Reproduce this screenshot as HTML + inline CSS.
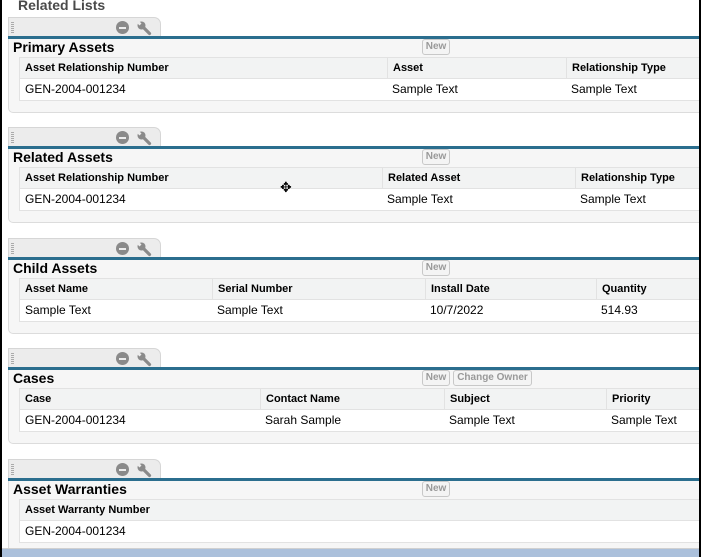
<!DOCTYPE html>
<html><head><meta charset="utf-8"><style>
*{margin:0;padding:0;box-sizing:border-box}
body{width:701px;height:557px;overflow:hidden;background:#fff;font-family:"Liberation Sans",Arial,sans-serif;color:#000;position:relative}
.abs{position:absolute}
.h1{left:18px;top:-3px;font-size:14px;font-weight:bold;color:#4a4a4a}
.tab{left:8px;width:153px;height:20px;background:#ececec;border:1px solid #d6d6d6;border-bottom:none;border-radius:0 7px 0 0}
.grip{position:absolute;left:2px;top:4px;width:3px;height:11px;background:repeating-linear-gradient(#aaa 0 1px,transparent 1px 2px)}
.minus{position:absolute;left:107px;top:3px;width:13px;height:13px;border-radius:50%;background:#8a8a8a}
.minus:after{content:"";position:absolute;left:3px;top:6px;width:7px;height:2px;background:#ececec}
.wr{position:absolute;left:127px;top:2px}
.line{left:8px;right:0;height:3px;background:#2b6e8e}
.panel{left:8px;right:0;height:74px;background:#f6f6f6;border:1px solid #dcdcdc;border-top:none;border-radius:0 0 0 5px}
.title{left:13px;font-size:14px;font-weight:bold}
.btn{height:16px;border:1px solid #c8c8c8;border-radius:3px;background:#f4f4f4;color:#999;font-size:10px;font-weight:bold;line-height:14px;text-align:center}
.th{left:19px;right:0;height:22px;background:#f2f3f3;border:1px solid #e2e2e2;border-right:none}
.td{left:19px;right:0;height:22px;background:#fff;border:1px solid #e2e2e2;border-top:none;border-right:none}
.c{position:absolute;top:0;height:100%;line-height:20px;padding-left:5px;border-left:1px solid #e2e2e2}
.th .c{font-size:11px;font-weight:bold}
.td .c{font-size:12px;border-left:none}
.c.f{border-left:none}
</style></head><body>
<div class="abs h1">Related Lists</div>

<div class="abs tab" style="top:17px"><div class="grip"></div><div class="minus"></div><svg class="wr" width="16" height="16" viewBox="0 0 16 16"><circle cx="5.5" cy="5.5" r="4" fill="#8a8a8a"/><path d="M3 1 L5.5 3.5 L3.5 5.5 L1 3 Z" fill="#ececec"/><path d="M6 6 L13.5 13.5" stroke="#8a8a8a" stroke-width="3.2" stroke-linecap="round"/></svg></div>
<div class="abs line" style="top:36px"></div>
<div class="abs panel" style="top:39px"></div>
<div class="abs title" style="top:39px">Primary Assets</div>
<div class="abs btn" style="left:422px;top:39px;width:28px">New</div>
<div class="abs th" style="top:57px"><div class="c f" style="left:0">Asset Relationship Number</div><div class="c" style="left:367px">Asset</div><div class="c" style="left:546px">Relationship Type</div></div>
<div class="abs td" style="top:79px"><div class="c" style="left:0">GEN-2004-001234</div><div class="c" style="left:367px">Sample Text</div><div class="c" style="left:546px">Sample Text</div></div>

<div class="abs tab" style="top:127px"><div class="grip"></div><div class="minus"></div><svg class="wr" width="16" height="16" viewBox="0 0 16 16"><circle cx="5.5" cy="5.5" r="4" fill="#8a8a8a"/><path d="M3 1 L5.5 3.5 L3.5 5.5 L1 3 Z" fill="#ececec"/><path d="M6 6 L13.5 13.5" stroke="#8a8a8a" stroke-width="3.2" stroke-linecap="round"/></svg></div>
<div class="abs line" style="top:146px"></div>
<div class="abs panel" style="top:149px"></div>
<div class="abs title" style="top:149px">Related Assets</div>
<div class="abs btn" style="left:422px;top:149px;width:28px">New</div>
<div class="abs th" style="top:167px"><div class="c f" style="left:0">Asset Relationship Number</div><div class="c" style="left:362px">Related Asset</div><div class="c" style="left:555px">Relationship Type</div></div>
<div class="abs td" style="top:189px"><div class="c" style="left:0">GEN-2004-001234</div><div class="c" style="left:362px">Sample Text</div><div class="c" style="left:555px">Sample Text</div></div>
<div class="abs" style="left:280px;top:180px;font-size:14px;line-height:14px">✥</div>

<div class="abs tab" style="top:238px"><div class="grip"></div><div class="minus"></div><svg class="wr" width="16" height="16" viewBox="0 0 16 16"><circle cx="5.5" cy="5.5" r="4" fill="#8a8a8a"/><path d="M3 1 L5.5 3.5 L3.5 5.5 L1 3 Z" fill="#ececec"/><path d="M6 6 L13.5 13.5" stroke="#8a8a8a" stroke-width="3.2" stroke-linecap="round"/></svg></div>
<div class="abs line" style="top:257px"></div>
<div class="abs panel" style="top:260px"></div>
<div class="abs title" style="top:260px">Child Assets</div>
<div class="abs btn" style="left:422px;top:260px;width:28px">New</div>
<div class="abs th" style="top:278px"><div class="c f" style="left:0">Asset Name</div><div class="c" style="left:192px">Serial Number</div><div class="c" style="left:405px">Install Date</div><div class="c" style="left:576px">Quantity</div></div>
<div class="abs td" style="top:300px"><div class="c" style="left:0">Sample Text</div><div class="c" style="left:192px">Sample Text</div><div class="c" style="left:405px">10/7/2022</div><div class="c" style="left:576px">514.93</div></div>

<div class="abs tab" style="top:348px"><div class="grip"></div><div class="minus"></div><svg class="wr" width="16" height="16" viewBox="0 0 16 16"><circle cx="5.5" cy="5.5" r="4" fill="#8a8a8a"/><path d="M3 1 L5.5 3.5 L3.5 5.5 L1 3 Z" fill="#ececec"/><path d="M6 6 L13.5 13.5" stroke="#8a8a8a" stroke-width="3.2" stroke-linecap="round"/></svg></div>
<div class="abs line" style="top:367px"></div>
<div class="abs panel" style="top:370px"></div>
<div class="abs title" style="top:370px">Cases</div>
<div class="abs btn" style="left:422px;top:370px;width:28px">New</div>
<div class="abs btn" style="left:453px;top:370px;width:79px">Change Owner</div>
<div class="abs th" style="top:388px"><div class="c f" style="left:0">Case</div><div class="c" style="left:240px">Contact Name</div><div class="c" style="left:424px">Subject</div><div class="c" style="left:586px">Priority</div></div>
<div class="abs td" style="top:410px"><div class="c" style="left:0">GEN-2004-001234</div><div class="c" style="left:240px">Sarah Sample</div><div class="c" style="left:424px">Sample Text</div><div class="c" style="left:586px">Sample Text</div></div>

<div class="abs tab" style="top:459px"><div class="grip"></div><div class="minus"></div><svg class="wr" width="16" height="16" viewBox="0 0 16 16"><circle cx="5.5" cy="5.5" r="4" fill="#8a8a8a"/><path d="M3 1 L5.5 3.5 L3.5 5.5 L1 3 Z" fill="#ececec"/><path d="M6 6 L13.5 13.5" stroke="#8a8a8a" stroke-width="3.2" stroke-linecap="round"/></svg></div>
<div class="abs line" style="top:478px"></div>
<div class="abs panel" style="top:481px"></div>
<div class="abs title" style="top:481px">Asset Warranties</div>
<div class="abs btn" style="left:422px;top:481px;width:28px">New</div>
<div class="abs th" style="top:499px"><div class="c f" style="left:0">Asset Warranty Number</div></div>
<div class="abs td" style="top:521px"><div class="c" style="left:0">GEN-2004-001234</div></div>

<div class="abs" style="left:0;right:0;top:548px;height:1px;background:#d0d0d0"></div>
<div class="abs" style="left:0;right:0;top:549px;height:8px;background:#abc0db"></div>
<div class="abs" style="left:0;top:0;width:2px;height:557px;background:#000"></div>
<div class="abs" style="right:0;top:0;width:2px;height:557px;background:#000"></div>
</body></html>
